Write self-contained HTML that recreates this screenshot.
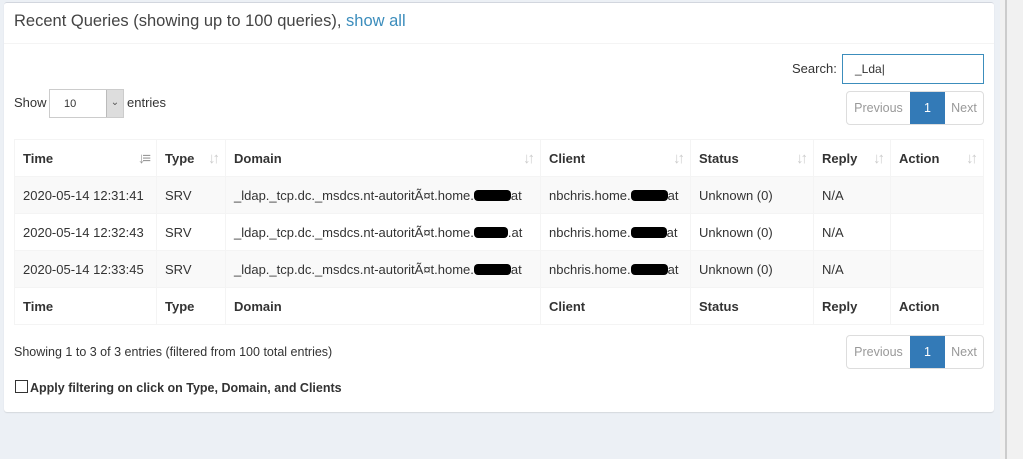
<!DOCTYPE html>
<html><head><meta charset="utf-8"><style>
*{box-sizing:border-box;margin:0;padding:0}
body{width:1023px;height:459px;overflow:hidden;background:#ecf0f5;font-family:"Liberation Sans",sans-serif;font-size:13px;color:#333;position:relative}
.a{position:absolute;white-space:nowrap}
.box{position:absolute;left:4px;top:2px;width:990px;height:410px;background:#fff;border-top:1px solid #d2d6de;border-radius:3px;box-shadow:0 1px 1px rgba(0,0,0,.1)}
.strip{position:absolute;left:1000px;top:0;width:23px;height:459px;background:#f1f1f1}
.strip2{position:absolute;left:1005px;top:0;width:2px;height:459px;background:#ccc}
table{position:absolute;left:14px;top:139px;border-collapse:collapse;width:970px}
td,th{border:1px solid #f4f4f4;padding:0 8px;height:37px;text-align:left;position:relative}
th{font-weight:bold}
tr.o td{background:#f9f9f9}
.s{position:absolute;right:8px;top:10px;color:#ccc;font-size:15px;font-weight:bold;letter-spacing:-3px}
.bl{display:inline-block;background:#000;height:11px;vertical-align:-1px;border-radius:4px}
.pg{position:absolute;display:flex;height:34px;border:1px solid #ddd;border-radius:4px;overflow:hidden;font-size:12.5px;width:138px}
.pg span{line-height:32px;color:#999;text-align:center}
.pg .c{background:#337ab7;color:#fff}
</style></head><body>
<div class="strip"></div><div class="strip2"></div>
<div class="box"></div>
<div class="a" style="left:4px;top:43px;width:990px;height:1px;background:#f4f4f4"></div>
<div class="a" style="left:14px;top:12px;font-size:16.5px;color:#444">Recent Queries (showing up to 100 queries), <span style="color:#3c8dbc">show all</span></div>
<div class="a" style="left:792px;top:61px">Search:</div>
<div class="a" style="left:842px;top:54px;width:142px;height:30px;border:1px solid #3c8dbc;padding:7px 12px;font-size:12px">_Lda|</div>
<div class="a" style="left:14px;top:95px">Show</div>
<div class="a" style="left:49px;top:89px;width:75px;height:29px;border:1px solid #ccc;font-size:11px;padding:8px 14px">10</div>
<div class="a" style="left:106px;top:90px;width:17px;height:27px;background:#ddd;border-left:1px solid #bbb;text-align:center;font-size:10px;line-height:25px;color:#555">&#8964;</div>
<div class="a" style="left:127px;top:95px">entries</div>
<div class="pg" style="left:846px;top:91px"><span style="width:63px">Previous</span><span class="c" style="width:35px">1</span><span style="width:38px">Next</span></div>
<table>
<tr><th style="width:142px">Time<span class="s" style="color:#999">↓≡</span></th><th style="width:69px">Type<span class="s">↓↑</span></th><th style="width:315px">Domain<span class="s">↓↑</span></th><th style="width:150px">Client<span class="s">↓↑</span></th><th style="width:123px">Status<span class="s">↓↑</span></th><th style="width:77px">Reply<span class="s">↓↑</span></th><th>Action<span class="s">↓↑</span></th></tr>
<tr class="o"><td>2020-05-14 12:31:41</td><td>SRV</td><td>_ldap._tcp.dc._msdcs.nt-autoritÃ¤t.home.<span class="bl" style="width:37px"></span>at</td><td>nbchris.home.<span class="bl" style="width:37px"></span>at</td><td>Unknown (0)</td><td>N/A</td><td></td></tr>
<tr><td>2020-05-14 12:32:43</td><td>SRV</td><td>_ldap._tcp.dc._msdcs.nt-autoritÃ¤t.home.<span class="bl" style="width:34px"></span>.at</td><td>nbchris.home.<span class="bl" style="width:36px"></span>at</td><td>Unknown (0)</td><td>N/A</td><td></td></tr>
<tr class="o"><td>2020-05-14 12:33:45</td><td>SRV</td><td>_ldap._tcp.dc._msdcs.nt-autoritÃ¤t.home.<span class="bl" style="width:37px"></span>at</td><td>nbchris.home.<span class="bl" style="width:37px"></span>at</td><td>Unknown (0)</td><td>N/A</td><td></td></tr>
<tr><th>Time</th><th>Type</th><th>Domain</th><th>Client</th><th>Status</th><th>Reply</th><th>Action</th></tr>
</table>
<div class="a" style="left:14px;top:345px;font-size:12.5px">Showing 1 to 3 of 3 entries (filtered from 100 total entries)</div>
<div class="pg" style="left:846px;top:335px"><span style="width:63px">Previous</span><span class="c" style="width:35px">1</span><span style="width:38px">Next</span></div>
<div class="a" style="left:15px;top:380px;width:13px;height:13px;border:1px solid #333"></div>
<div class="a" style="left:30px;top:381px;font-weight:bold;font-size:12.5px">Apply filtering on click on Type, Domain, and Clients</div>
</body></html>
